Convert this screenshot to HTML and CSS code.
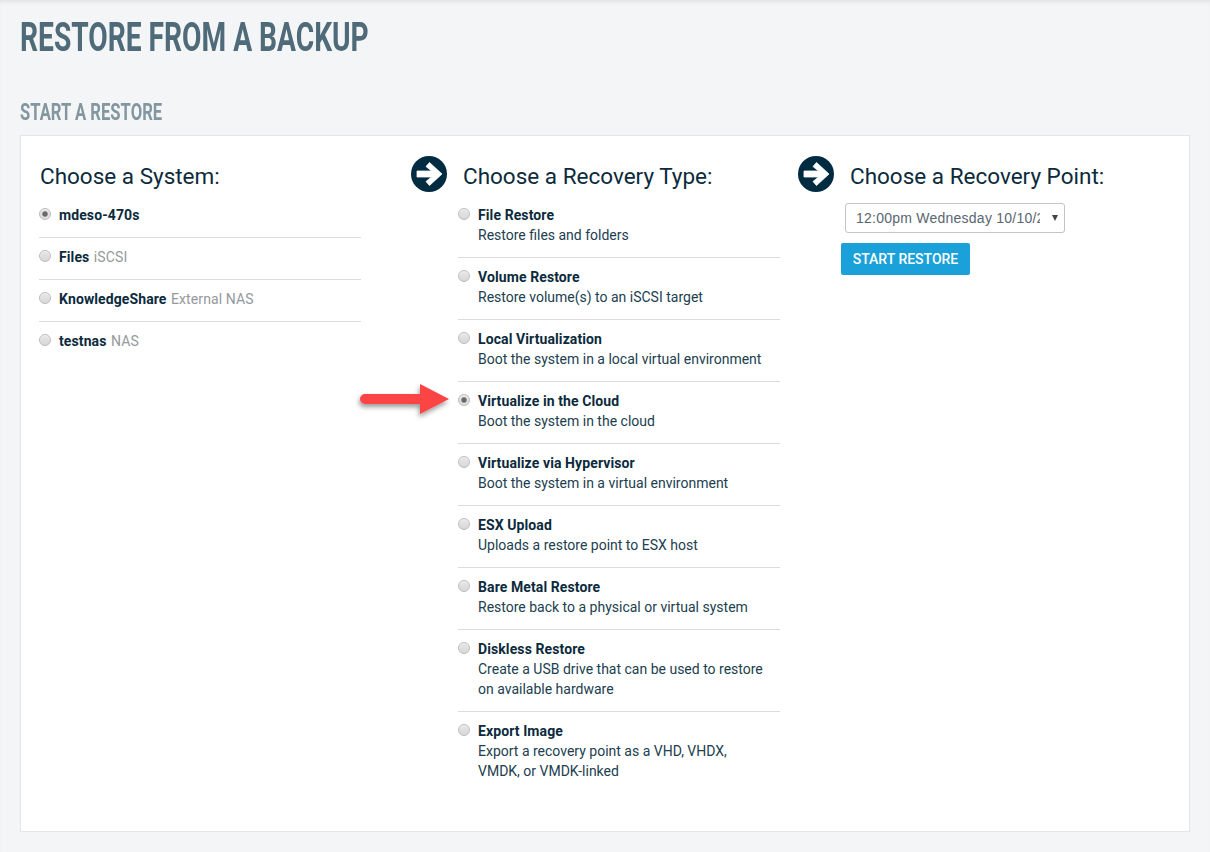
FILE: index.html
```html
<!DOCTYPE html>
<html lang="en">
<head>
<meta charset="utf-8">
<title>Restore from a Backup</title>
<link rel="stylesheet" href="styles.css">
</head>
<body>
<main class="page">
  <h1 class="page-title">RESTORE FROM A BACKUP</h1>
  <h2 class="section-title">START A RESTORE</h2>
  <section class="panel">
    <div class="col col-system">
      <h3 class="col-title">Choose a System:</h3>
      <ul class="opts">
        <li class="opt"><input class="radio" type="radio" name="sys" checked><div class="opt-text"><b>mdeso-470s</b></div></li>
        <li class="opt"><input class="radio" type="radio" name="sys"><div class="opt-text"><b>Files</b> <span class="muted">iSCSI</span></div></li>
        <li class="opt"><input class="radio" type="radio" name="sys"><div class="opt-text"><b>KnowledgeShare</b> <span class="muted">External NAS</span></div></li>
        <li class="opt"><input class="radio" type="radio" name="sys"><div class="opt-text"><b>testnas</b> <span class="muted">NAS</span></div></li>
      </ul>
    </div>
    <div class="col col-type">
      <div class="col-head">
        <svg class="step" viewBox="0 0 36 36"><circle cx="18" cy="18" r="18" fill="#002b41"/><path d="M6 15H20.500L15 10.500L18.500 6.500L31 18L18.500 29.500L15 25.500L20.500 21H6Z" fill="#fff" stroke="#fff" stroke-width=".8" stroke-linejoin="round"/></svg>
        <h3 class="col-title">Choose a Recovery Type:</h3>
      </div>
      <ul class="opts opts-indent">
        <li class="opt"><input class="radio" type="radio" name="type"><div class="opt-text"><b>File Restore</b><p>Restore files and folders</p></div></li>
        <li class="opt"><input class="radio" type="radio" name="type"><div class="opt-text"><b>Volume Restore</b><p>Restore volume(s) to an iSCSI target</p></div></li>
        <li class="opt"><input class="radio" type="radio" name="type"><div class="opt-text"><b>Local Virtualization</b><p>Boot the system in a local virtual environment</p></div></li>
        <li class="opt"><input class="radio" type="radio" name="type" checked><div class="opt-text"><b>Virtualize in the Cloud</b><p>Boot the system in the cloud</p></div></li>
        <li class="opt"><input class="radio" type="radio" name="type"><div class="opt-text"><b>Virtualize via Hypervisor</b><p>Boot the system in a virtual environment</p></div></li>
        <li class="opt"><input class="radio" type="radio" name="type"><div class="opt-text"><b>ESX Upload</b><p>Uploads a restore point to ESX host</p></div></li>
        <li class="opt"><input class="radio" type="radio" name="type"><div class="opt-text"><b>Bare Metal Restore</b><p>Restore back to a physical or virtual system</p></div></li>
        <li class="opt"><input class="radio" type="radio" name="type"><div class="opt-text"><b>Diskless Restore</b><p>Create a USB drive that can be used to restore<br>on available hardware</p></div></li>
        <li class="opt"><input class="radio" type="radio" name="type"><div class="opt-text"><b>Export Image</b><p>Export a recovery point as a VHD, VHDX,<br>VMDK, or VMDK-linked</p></div></li>
      </ul>
    </div>
    <div class="col col-point">
      <div class="col-head">
        <svg class="step" viewBox="0 0 36 36"><circle cx="18" cy="18" r="18" fill="#002b41"/><path d="M6 15H20.500L15 10.500L18.500 6.500L31 18L18.500 29.500L15 25.500L20.500 21H6Z" fill="#fff" stroke="#fff" stroke-width=".8" stroke-linejoin="round"/></svg>
        <h3 class="col-title">Choose a Recovery Point:</h3>
      </div>
      <div class="select"><span class="select-text">12:00pm Wednesday 10/10/2018</span><span class="caret"></span></div>
      <button class="btn" type="button">START RESTORE</button>
    </div>
    <svg class="callout" viewBox="0 0 110 50">
      <defs><filter id="sh" x="-20%" y="-40%" width="140%" height="200%"><feDropShadow dx="-1" dy="3" stdDeviation="2.500" flood-color="#000" flood-opacity=".4"/></filter></defs>
      <path filter="url(#sh)" d="M11 15H66V5L95 20L66 35V25H11A5 5 0 0 1 11 15Z" fill="#fb4444"/>
    </svg>
  </section>
</main>
</body>
</html>
```

FILE: styles.css
```css
* { box-sizing: border-box; }
html, body { margin: 0; padding: 0; }
body {
  background: #f4f5f7;
  font-family: Roboto, "Liberation Sans", sans-serif;
  color: #0b2a3c;
  height: 852px;
  overflow: hidden;
}
.page {
  padding: 17px 20px 0;
  box-shadow: inset 0 4px 4px -2px rgba(0,0,0,.08);
  height: 852px;
}
.page-title {
  margin: 0;
  height: 46px;
  font-size: 40px;
  line-height: 42px;
  font-weight: 700;
  color: #4f6a78;
  transform: scaleX(.704);
  transform-origin: left center;
  white-space: nowrap;
}
.section-title {
  margin: 35px 0 0;
  height: 37px;
  font-size: 24px;
  line-height: 28px;
  font-weight: 700;
  color: #82979f;
  transform: scaleX(.693);
  transform-origin: left center;
  white-space: nowrap;
}
.panel {
  position: relative;
  display: flex;
  height: 697px;
  background: #fff;
  border: 1px solid #e3e5e8;
  padding: 22px 0 0 18px;
}
.col-system { width: 372px; }
.col-type { width: 387px; }
.col-title {
  margin: 0;
  font-size: 22.5px;
  line-height: 36px;
  font-weight: 400;
  color: #0b2a3c;
  white-space: nowrap;
}
.col-system .col-title { padding-left: 1px; margin-bottom: 3px; }
.col-head { display: flex; align-items: center; gap: 16px; margin-bottom: 3px; height: 36px; }
.step { width: 36px; height: 36px; flex: none; margin-top: -4px; }
.opts { list-style: none; margin: -1px 0 0; padding: 0; width: 322px; }
.opts-indent { margin-left: 47px; }
.opt {
  display: flex;
  padding: 9px 0 12px;
  border-bottom: 1px solid #dcdcdc;
  font-size: 14px;
  line-height: 20px;
}
.opt:last-child { border-bottom: 0; }
.opt p { margin: 0; color: #21404f; }
.opt b { font-weight: 700; color: #0b2a3c; letter-spacing: .1px; }
.muted { color: #94999c; letter-spacing: .1px; margin-left: 1px; }
.opt-text { margin-left: 8px; white-space: nowrap; }
.radio {
  appearance: none;
  -webkit-appearance: none;
  width: 12px;
  height: 12px;
  margin: 3px 0 0;
  flex: none;
  border-radius: 50%;
  border: 1px solid #bbb;
  background: linear-gradient(#e6e6e6, #d8d8d8);
  box-shadow: inset 0 1px 1px #f4f4f4;
}
.radio:checked {
  background: radial-gradient(circle, #6a6a6a 0 2.2px, #dedede 3.2px);
}
.select {
  display: flex;
  align-items: center;
  width: 220px;
  height: 30px;
  margin: 9px 0 0 47px;
  padding-left: 10px;
  background: #fff;
  border: 1px solid #c4c4c4;
  border-radius: 3px;
  font-family: "Liberation Sans", Arial, sans-serif;
  font-size: 14px;
  letter-spacing: .24px;
  color: #5a6670;
}
.select-text { width: 184px; overflow: hidden; white-space: nowrap; }
.caret {
  margin-left: 12px;
  border-left: 3.5px solid transparent;
  border-right: 3.5px solid transparent;
  border-top: 6px solid #444;
}
.btn {
  display: block;
  width: 129px;
  height: 32px;
  margin: 10px 0 0 43px;
  padding: 0;
  border: 0;
  border-radius: 2px;
  background: #1ba1da;
  color: #fff;
  font-family: inherit;
  font-size: 14px;
  font-weight: 500;
  letter-spacing: 0;
}
.callout {
  position: absolute;
  left: 333px;
  top: 243px;
  width: 110px;
  height: 50px;
}
```
